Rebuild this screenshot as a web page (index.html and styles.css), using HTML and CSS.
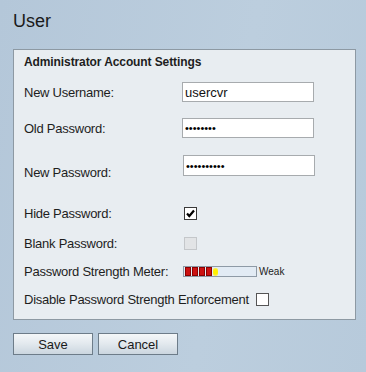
FILE: index.html
```html
<!DOCTYPE html>
<html>
<head>
<meta charset="utf-8">
<link rel="stylesheet" href="styles.css">
</head>
<body>
<h1 class="title">User</h1>
<div class="panel">
  <div class="hdr">Administrator Account Settings</div>
  <div class="row r1">
    <span class="lbl">New Username:</span>
    <input class="txt" type="text" value="usercvr">
  </div>
  <div class="row r2">
    <span class="lbl">Old Password:</span>
    <input class="txt" type="password" value="12345678">
  </div>
  <div class="row r3">
    <span class="lbl low">New Password:</span>
    <input class="txt" type="password" value="1234567890">
  </div>
  <div class="row r4">
    <span class="lbl">Hide Password:</span>
    <span class="cb on"><svg width="11" height="11" viewBox="0 0 11 11"><path d="M2 5.5 L4.3 8 L9 2.5" fill="none" stroke="#000" stroke-width="2.2"/></svg></span>
  </div>
  <div class="row r5">
    <span class="lbl">Blank Password:</span>
    <span class="cb dis"></span>
  </div>
  <div class="row r6">
    <span class="lbl">Password Strength Meter:</span>
    <span class="meter"><i class="seg"></i><i class="seg"></i><i class="seg"></i><i class="seg"></i><i class="yel"></i></span>
    <span class="weak">Weak</span>
  </div>
  <div class="row r7">
    <span class="lbl2">Disable Password Strength Enforcement</span>
    <span class="cb"></span>
  </div>
</div>
<div class="btns">
  <button class="btn">Save</button>
  <button class="btn">Cancel</button>
</div>
</body>
</html>
```
FILE: styles.css
```css
html, body {
  margin: 0;
  padding: 0;
}
body {
  width: 366px;
  height: 372px;
  background: linear-gradient(100deg, #b4c7d9 0%, #bccede 60%, #b7cadb 100%);
  font-family: "Liberation Sans", Arial, sans-serif;
  color: #1e1e1e;
  overflow: hidden;
}
.title {
  margin: 0;
  padding: 11px 0 0 13px;
  font-size: 18px;
  font-weight: normal;
  line-height: 20px;
  height: 20px;
  color: #1a1a1a;
}
.panel {
  margin: 18px 10px 0 13px;
  height: 269px;
  border: 1px solid #8d99a3;
  background: #e8edf1;
  padding: 0 10px;
  display: flex;
  flex-direction: column;
}
.hdr {
  margin-top: 5px;
  font-size: 12px;
  font-weight: bold;
  line-height: 14px;
  height: 14px;
  letter-spacing: -0.1px;
}
.row {
  display: flex;
  align-items: center;
  font-size: 13px;
  line-height: 15px;
  letter-spacing: -0.25px;
}
.lbl {
  width: 158px;
  flex: none;
}
.r1 { margin-top: 13px; height: 20px; }
.r2 { margin-top: 16px; height: 20px; }
.r3 { margin-top: 17px; height: 21px; align-items: flex-start; }
.r3 .lbl.low { margin-top: 10px; }
.r3 .txt { margin-left: 1px; height: 21px; }
.r4 { margin-top: 31px; height: 13px; }
.r5 { margin-top: 17px; height: 13px; }
.r6 { margin-top: 16px; height: 11px; }
.r7 { margin-top: 16px; height: 13px; }
.txt {
  box-sizing: border-box;
  width: 132px;
  height: 20px;
  margin: 0;
  padding: 0 2px;
  border: 1px solid #a7abae;
  background: #fff;
  font-family: "Liberation Sans", Arial, sans-serif;
  font-size: 13px;
  letter-spacing: 0;
  color: #111;
  outline: none;
}
input[type=password].txt {
  font-size: 11px;
  letter-spacing: 0;
  color: #000;
}
.cb {
  box-sizing: border-box;
  width: 13px;
  height: 13px;
  margin-left: 2px;
  border: 1px solid #3a3a3a;
  background: #fff;
  display: inline-flex;
  align-items: center;
  justify-content: center;
}
.cb.dis {
  border-color: #c4c7ca;
  background: #e2e4e6;
}
.r7 .cb {
  margin-left: 7px;
  border-color: #555;
}
.meter {
  box-sizing: border-box;
  width: 74px;
  height: 11px;
  margin-left: 1px;
  border: 1px solid #8e9aa6;
  background: #e2ebf4;
  display: flex;
  align-items: center;
  padding-left: 1px;
  gap: 1px;
}
.seg {
  display: block;
  width: 4px;
  height: 7px;
  background: #cc1111;
  border: 1px solid #8a0000;
}
.yel {
  display: block;
  width: 5px;
  height: 8px;
  background: radial-gradient(circle, #fff000 40%, #f8f080 100%);
  border-radius: 2px;
}
.weak {
  margin-left: 2px;
  font-size: 10px;
  letter-spacing: 0;
  color: #222;
}
.lbl2 {
  flex: none;
}
.btns {
  margin: 13px 0 0 13px;
  display: flex;
  gap: 5px;
}
.btn {
  box-sizing: border-box;
  width: 80px;
  height: 22px;
  margin: 0;
  padding: 0;
  border: 1px solid #6d7c89;
  background: linear-gradient(#f4f7f9 0%, #e4eaef 45%, #cbd6df 100%);
  font-family: "Liberation Sans", Arial, sans-serif;
  font-size: 13px;
  color: #1a1a1a;
}
```
